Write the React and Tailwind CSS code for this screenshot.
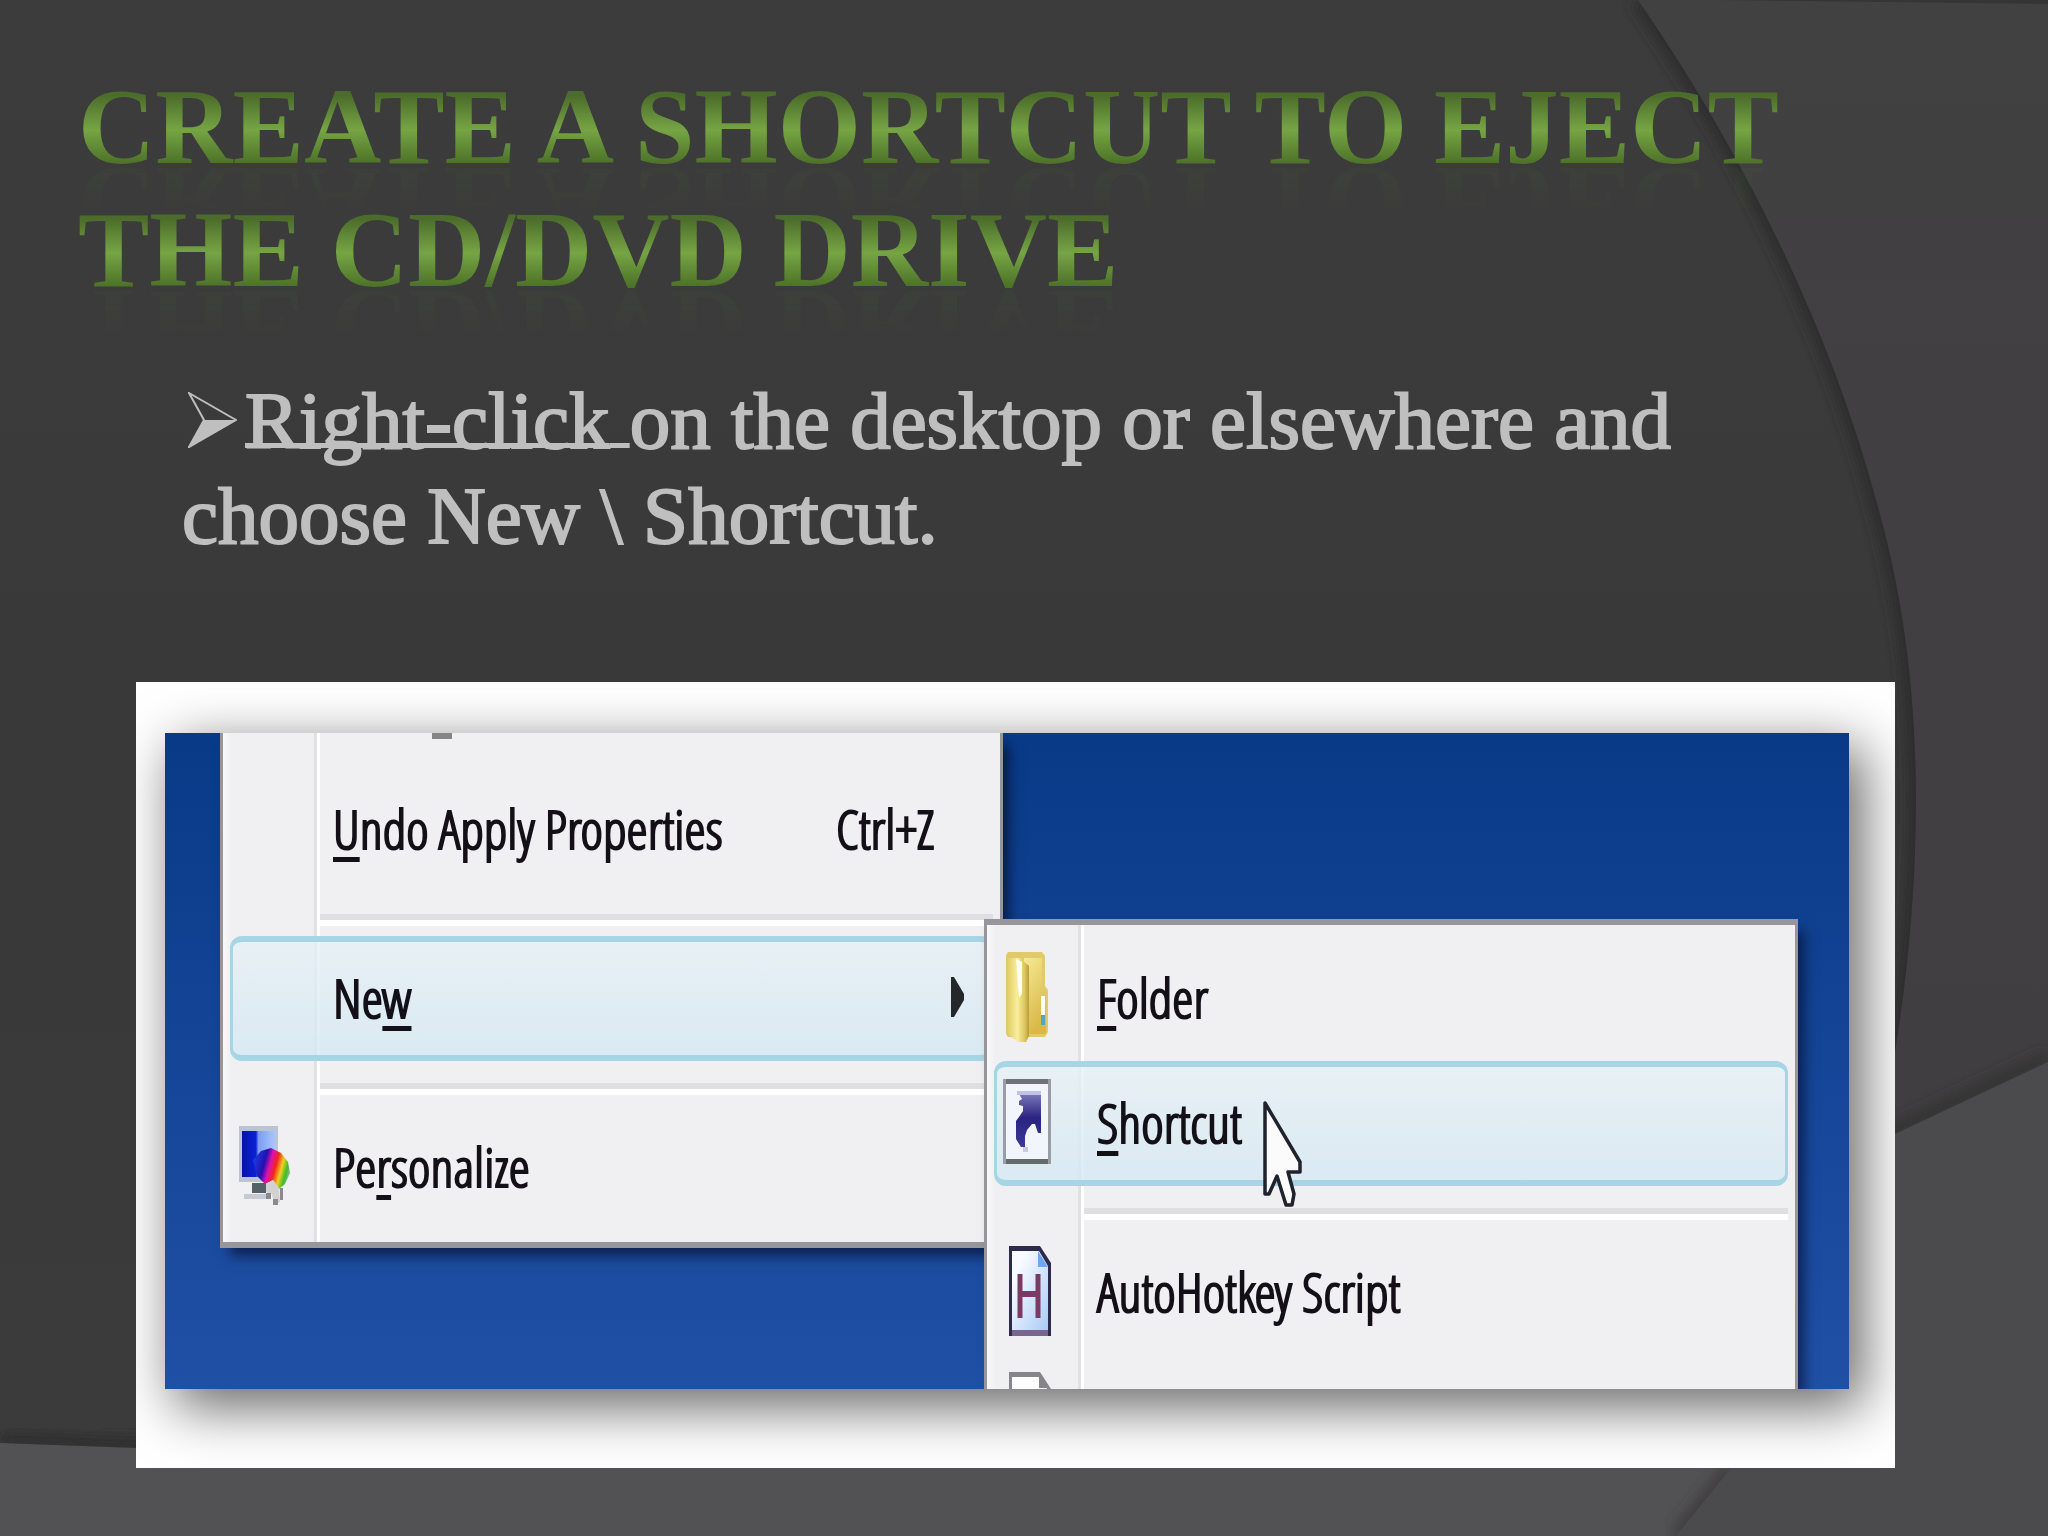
import clsx from 'clsx';

function Backdrop() {
  return (
    <svg
      className="absolute inset-0 -z-10 h-full w-full"
      viewBox="0 0 2048 1536"
      preserveAspectRatio="none"
      aria-hidden="true"
    >
      <defs>
        <linearGradient id="base" x1="0" y1="0" x2="0" y2="1">
          <stop offset="0" stopColor="#3c3c3c" />
          <stop offset="0.5" stopColor="#3a393a" />
          <stop offset="1" stopColor="#3b3b3b" />
        </linearGradient>
        <linearGradient id="side" x1="0" y1="0" x2="0" y2="1">
          <stop offset="0" stopColor="#414141" />
          <stop offset="0.4" stopColor="#423f42" />
          <stop offset="1" stopColor="#403e40" />
        </linearGradient>
        <filter id="soft" x="-20%" y="-20%" width="140%" height="140%">
          <feGaussianBlur stdDeviation="7" />
        </filter>
      </defs>
      <rect width="2048" height="1536" fill="url(#base)" />
      <path
        d="M1638 0C1735 140 1828 320 1876 500C1905 600 1916 700 1916 800C1916 900 1905 1000 1890 1080"
        fill="none"
        stroke="#2b2b2b"
        strokeWidth="14"
        filter="url(#soft)"
      />
      <path
        d="M1638 0C1735 140 1828 320 1876 500C1905 600 1916 700 1916 800C1916 900 1905 1000 1890 1080L1860 1200H2048V0Z"
        fill="url(#side)"
      />
      <path d="M1719 0H2048V4Z" fill="#353535" />
      <path d="M0 1440L136 1445L1700 1500" fill="none" stroke="#2a2a2a" strokeWidth="12" filter="url(#soft)" />
      <path d="M1840 1156L2048 1058" fill="none" stroke="#333133" strokeWidth="12" filter="url(#soft)" />
      <path d="M0 1443L136 1448L700 1460H1800V1536H0Z" fill="#525254" />
      <path d="M1731 1468L1676 1536" fill="none" stroke="#3a393b" strokeWidth="12" filter="url(#soft)" />
      <path d="M2048 1062L1895 1134L1800 1380L1731 1468L1676 1536H2048Z" fill="#4b4a4c" />
    </svg>
  );
}

function TitleLine({ children }) {
  return (
    <span className="block bg-[linear-gradient(to_bottom,#4c6c2b_24%,#76a544_52%,#4b7027_80%)] bg-clip-text text-transparent [-webkit-box-reflect:below_-47px_linear-gradient(transparent_42%,rgba(0,0,0,0.12))]">
      {children}
    </span>
  );
}

function BulletArrow() {
  return (
    <svg className="mr-2 ml-1.5 inline-block h-14 w-[49px] align-baseline" viewBox="0 0 49 56" aria-hidden="true">
      <path d="M1 1L48 28L1 55L16 28Z" fill="none" stroke="#bfbfbf" strokeWidth="2" />
      <path d="M16 28H49L0 56Z" fill="#bfbfbf" />
    </svg>
  );
}

function PersonalizeIcon() {
  return (
    <svg className="h-20 w-[58px] shrink-0" viewBox="-5 0 58 80" aria-hidden="true">
      <defs>
        <linearGradient id="screen" x1="0" x2="1">
          <stop offset="0" stopColor="#0612a8" />
          <stop offset="0.42" stopColor="#0a20d8" />
          <stop offset="0.5" stopColor="#7d9cf2" />
          <stop offset="1" stopColor="#a9c6ff" />
        </linearGradient>
        <linearGradient id="rainbow" x1="0" x2="1" y1="0.3" y2="0.6">
          <stop offset="0" stopColor="#1c3ce0" />
          <stop offset="0.3" stopColor="#2410b0" />
          <stop offset="0.45" stopColor="#e010b0" />
          <stop offset="0.6" stopColor="#f02818" />
          <stop offset="0.76" stopColor="#f0d020" />
          <stop offset="0.9" stopColor="#38c028" />
          <stop offset="1" stopColor="#8ab890" />
        </linearGradient>
      </defs>
      <rect x="0" y="0" width="39" height="56" fill="#bcc3d6" />
      <rect x="3" y="5" width="33" height="46" fill="url(#screen)" />
      <path d="M13 57H27V67H13Z" fill="#566068" />
      <path d="M5 68H32V73H5Z" fill="#c6c8d2" />
      <path d="M14 34L22 25L32 22L42 27L49 36L51 47L46 58L40 63L34 54L26 58L18 50Z" fill="url(#rainbow)" />
      <path d="M27 58L34 54L40 62L41 76L35 79L33 68L27 66Z" fill="#d2d2d2" />
      <path d="M27 67H32V73H27ZM34 73H39V79H34ZM41 62H44V74H41Z" fill="#8b8b8b" />
    </svg>
  );
}

function FolderIcon() {
  return (
    <svg className="h-[90px] w-[42px]" viewBox="0 0 42 90" aria-hidden="true">
      <defs>
        <linearGradient id="folder-back" x1="0" y1="0" x2="0.4" y2="1">
          <stop offset="0" stopColor="#f6ea96" />
          <stop offset="1" stopColor="#d9b848" />
        </linearGradient>
        <linearGradient id="folder-front" x1="0" x2="1">
          <stop offset="0" stopColor="#e4cf68" />
          <stop offset="0.45" stopColor="#f8ee9c" />
          <stop offset="0.8" stopColor="#dcc65e" />
          <stop offset="1" stopColor="#b89c38" />
        </linearGradient>
      </defs>
      <path d="M2 0H36L39 4V34L42 38V80L39 85H2L0 82V3Z" fill="#e0ca6c" />
      <path d="M18 6H36V34L40 40V82H18Z" fill="url(#folder-back)" />
      <path d="M2 6H14L23 14V84L20 90H12L2 82Z" fill="url(#folder-front)" />
      <path d="M10 7L16 10V42L13 46Z" fill="#fffdf0" />
      <path d="M35 44H39V63H35Z" fill="#fffdf4" />
      <path d="M35 63H39V73H35Z" fill="#4fa6c8" />
    </svg>
  );
}

function ShortcutIcon() {
  return (
    <svg className="h-[85px] w-12" viewBox="0 0 48 85" aria-hidden="true">
      <defs>
        <linearGradient id="arrow-ink" x1="0" y1="0" x2="0" y2="1">
          <stop offset="0" stopColor="#7a78bc" />
          <stop offset="0.45" stopColor="#2a2480" />
          <stop offset="1" stopColor="#3a3898" />
        </linearGradient>
      </defs>
      <rect x="0" y="0" width="48" height="85" fill="#9a9ea4" />
      <rect x="3" y="0" width="42" height="5" fill="#6f7377" />
      <rect x="3" y="80" width="42" height="5" fill="#656a6e" />
      <rect x="3" y="5" width="42" height="75" fill="#f2f5fc" />
      <path d="M16 15H38V54H35L32 45H29L24 51L22 57V68H18L13 60V42L16 38L20 32V27L16 26V22L19 20Z" fill="url(#arrow-ink)" />
      <path d="M14 12H38V16H14Z" fill="#c2c2e4" />
      <path d="M20 68H25V73H20Z" fill="#c8cade" />
    </svg>
  );
}

function ScriptIcon() {
  return (
    <svg className="h-[90px] w-12" viewBox="-6 0 48 90" aria-hidden="true">
      <defs>
        <linearGradient id="sheet" x1="0" y1="0" x2="1" y2="1">
          <stop offset="0.2" stopColor="#f8fbff" />
          <stop offset="1" stopColor="#a9cbf6" />
        </linearGradient>
      </defs>
      <path d="M0 0H31L42 17V90H0Z" fill="#2e2a4c" />
      <path d="M3 5H30L39 20V84H3Z" fill="url(#sheet)" />
      <path d="M29 5V21H39Z" fill="#6fa6ee" />
      <path d="M3 84H39V90H3Z" fill="#7c6490" />
      <path d="M11 28V72M29 28V72" fill="none" stroke="#7a3a64" strokeWidth="5" />
      <path d="M12 48H28" fill="none" stroke="#7a3a64" strokeWidth="6" />
    </svg>
  );
}

function DocumentIcon() {
  return (
    <svg className="h-[90px] w-[42px]" viewBox="0 0 42 90" aria-hidden="true">
      <path d="M0 0H31L42 17V90H0Z" fill="#85858a" />
      <path d="M3 5H30V16H38V84H3Z" fill="#fdfdfd" />
    </svg>
  );
}

function Pointer() {
  return (
    <svg className="absolute top-[39px] left-[269px] z-10 h-[108px] w-10" viewBox="0 0 40 108" aria-hidden="true">
      <path
        d="M2 3V94L6 94L14 76L23 105H29L31 94L25 72H37V62Z"
        fill="#fbfbfb"
        stroke="#20222e"
        strokeWidth="3.5"
        strokeLinejoin="round"
      />
    </svg>
  );
}

const Key = ({ children }) => (
  <span className="underline decoration-[5px] underline-offset-8 [text-decoration-skip-ink:none]">{children}</span>
);

function MenuItem({ icon, active, open, hint, children }) {
  return (
    <li role="none" className="relative mx-[7px]">
      <button
        type="button"
        role="menuitem"
        className={clsx(
          'flex h-[125px] w-full items-center rounded-xl border-x-[3px] border-y-[6px] pb-1 text-left',
          active
            ? 'border-[#a6d5e6] bg-linear-to-b from-[#e6f1f5]/80 to-[#d5e8f3]/80'
            : 'border-transparent'
        )}
      >
        <span className="flex w-[60px] shrink-0 justify-center">{icon}</span>
        <span className="grow pl-10 whitespace-nowrap">{children}</span>
        {hint && <span className="pr-14">{hint}</span>}
        {open && (
          <svg className="mr-[26px] h-10 w-[13px]" viewBox="0 0 13 40" aria-hidden="true">
            <path d="M0 0H3L13 17V23L3 40H0Z" fill="#25282b" />
          </svg>
        )}
      </button>
      {active && !open && <Pointer />}
    </li>
  );
}

function Separator() {
  return (
    <li
      role="separator"
      className="mt-[22px] mr-[7px] mb-[10px] ml-[97px] h-3 border-t-[6px] border-b-[6px] border-t-[#dfdee0] border-b-white"
    />
  );
}

function Menu({ label, className, children }) {
  return (
    <ul
      role="menu"
      aria-label={label}
      className={clsx(
        'border-x-[3px] border-[#97969b] bg-[linear-gradient(to_right,#f9f9fa_0,#f0eff1_8px,#f0eff1_91px,#e1e0e2_91px,#e1e0e2_94px,#fff_94px,#fff_97px,#f0eff1_97px)] shadow-[8px_10px_12px_-2px_rgba(0,0,20,0.55)]',
        className
      )}
    >
      {children}
    </ul>
  );
}

function Desktop() {
  return (
    <div className="flex items-start overflow-hidden bg-linear-to-b from-[#083a88] to-[#2050a6] pl-[55px] font-['Open_Sans_Condensed_Light','Open_Sans_Condensed','Roboto_Condensed',sans-serif] text-[54px] leading-none font-light text-[#141018] [-webkit-text-stroke:2px_#141018]">
      <Menu label="Desktop" className="w-[783px] shrink-0 border-b-[6px] pb-3">
        <li role="none" className="h-[34px] pl-[209px]">
          <span className="block h-1.5 w-5 bg-[#858585]" />
        </li>
        <MenuItem hint="Ctrl+Z">
          <Key>U</Key>ndo Apply Properties
        </MenuItem>
        <Separator />
        <MenuItem active open>
          Ne<Key>w</Key>
        </MenuItem>
        <Separator />
        <MenuItem icon={<PersonalizeIcon />}>
          Pe<Key>r</Key>sonalize
        </MenuItem>
      </Menu>
      <Menu label="New" className="relative mt-[186px] mr-[51px] -ml-[19px] grow border-t-[6px] pt-[11px]">
        <MenuItem icon={<FolderIcon />}>
          <Key>F</Key>older
        </MenuItem>
        <MenuItem icon={<ShortcutIcon />} active>
          <Key>S</Key>hortcut
        </MenuItem>
        <Separator />
        <MenuItem icon={<ScriptIcon />}>AutoHotkey Script</MenuItem>
        <li role="none" className="h-[34px] overflow-hidden pt-[17px] pl-[22px]">
          <DocumentIcon />
        </li>
      </Menu>
    </div>
  );
}

export default function App() {
  return (
    <main className="relative isolate min-h-screen overflow-hidden bg-[#3b3b3b] pt-[66px] pb-[68px]">
      <Backdrop />
      <h1 className="pl-[78px] font-['Liberation_Serif',serif] text-[107px] leading-[123px] font-bold whitespace-nowrap">
        <TitleLine>CREATE A SHORTCUT TO EJECT</TitleLine>
        <TitleLine>THE CD/DVD DRIVE</TitleLine>
      </h1>
      <p className="mt-[62px] pl-[182px] font-['Liberation_Serif',serif] text-[81px] leading-[95px] whitespace-nowrap text-[#bfbfbf] [-webkit-text-stroke:2px_#bfbfbf]">
        <BulletArrow />
        <span className="underline decoration-[5px] -underline-offset-[5px] [text-decoration-skip-ink:none]">
          Right-click{' '}
        </span>
        on the desktop or elsewhere and
        <br />
        choose New \ Shortcut.
      </p>
      <figure className="mt-[118px] mr-[153px] ml-[136px] overflow-hidden bg-white pt-[51px] pr-[46px] pb-[79px] pl-[29px]">
        <div className="shadow-[12px_16px_52px_2px_rgba(0,0,0,0.6)]">
          <Desktop />
        </div>
      </figure>
    </main>
  );
}
